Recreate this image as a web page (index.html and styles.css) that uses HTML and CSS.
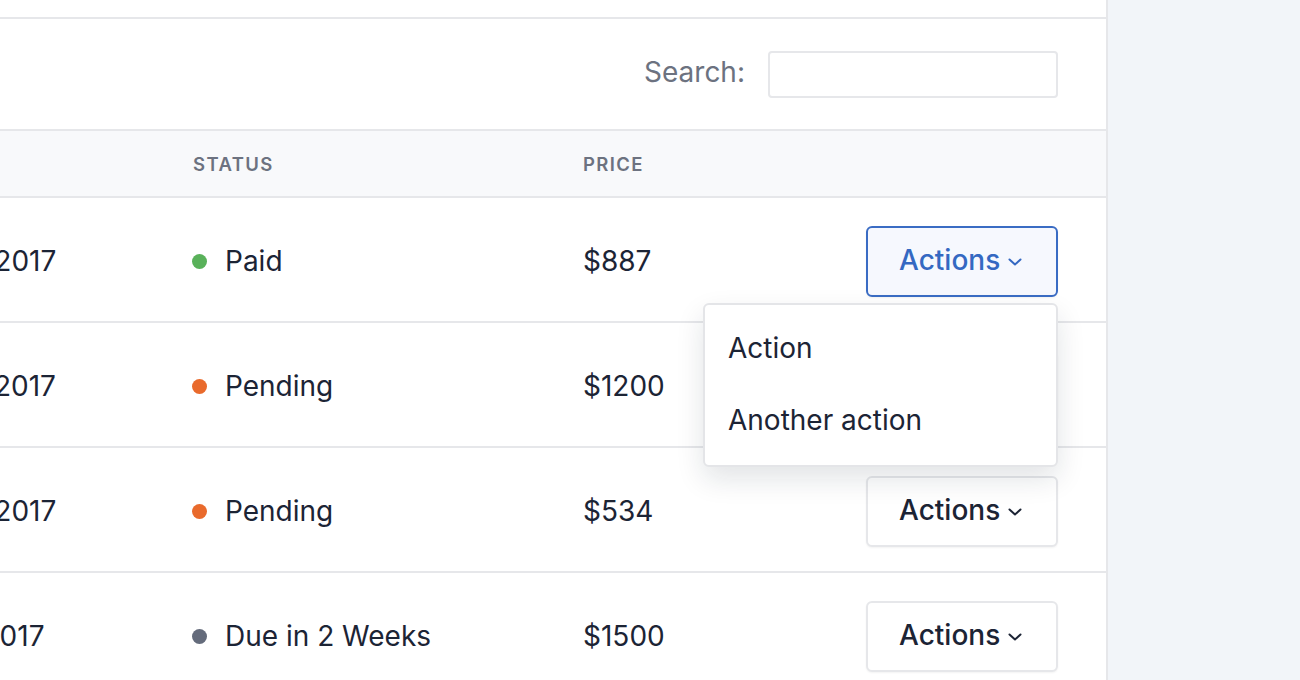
FILE: index.html
```html
<!DOCTYPE html>
<html>
<head>
<meta charset="utf-8">
<link rel="stylesheet" href="styles.css">
</head>
<body>
<div class="page">
  <div class="card">
    <div class="top-strip"></div>
    <div class="search-bar">
      <label class="search-label">Search:</label>
      <input class="search-input" type="text">
    </div>
    <div class="row head">
      <div class="cell date">Date</div>
      <div class="cell status">Status</div>
      <div class="cell price">Price</div>
      <div class="cell action"></div>
    </div>
    <div class="row">
      <div class="cell date">Nov 21, 2017</div>
      <div class="cell status"><span class="dot green"></span>Paid</div>
      <div class="cell price">$887</div>
      <div class="cell action">
        <div class="dropdown">
          <button class="btn active">Actions<svg class="chev" viewBox="0 0 14 8"><path d="M1.5 1.5 L7 6.5 L12.5 1.5"/></svg></button>
          <div class="menu">
            <div class="menu-item">Action</div>
            <div class="menu-item">Another action</div>
          </div>
        </div>
      </div>
    </div>
    <div class="row">
      <div class="cell date">Nov 18, 2017</div>
      <div class="cell status"><span class="dot orange"></span>Pending</div>
      <div class="cell price">$1200</div>
      <div class="cell action"><button class="btn">Actions<svg class="chev" viewBox="0 0 14 8"><path d="M1.5 1.5 L7 6.5 L12.5 1.5"/></svg></button></div>
    </div>
    <div class="row">
      <div class="cell date">Nov 12, 2017</div>
      <div class="cell status"><span class="dot orange"></span>Pending</div>
      <div class="cell price">$534</div>
      <div class="cell action"><button class="btn">Actions<svg class="chev" viewBox="0 0 14 8"><path d="M1.5 1.5 L7 6.5 L12.5 1.5"/></svg></button></div>
    </div>
    <div class="row">
      <div class="cell date">Nov 9, 2017</div>
      <div class="cell status"><span class="dot grey"></span>Due in 2 Weeks</div>
      <div class="cell price">$1500</div>
      <div class="cell action"><button class="btn">Actions<svg class="chev" viewBox="0 0 14 8"><path d="M1.5 1.5 L7 6.5 L12.5 1.5"/></svg></button></div>
    </div>
  </div>
  <div class="side"></div>
</div>
</body>
</html>
```
FILE: styles.css
```css
* { box-sizing: border-box; }
html, body {
  margin: 0;
  padding: 0;
  height: 100%;
  overflow: hidden;
}
body {
  background: #f2f5f9;
  font-family: Inter, "Noto Sans", sans-serif;
  color: #1c2435;
}
.page {
  display: flex;
  height: 680px;
}
.card {
  flex: none;
  width: 1308px;
  margin-left: -200px;
  background: #fff;
  border-right: 2px solid #e6e7ea;
}
.top-strip {
  height: 19px;
  border-bottom: 2px solid #e6e7ea;
}
.search-bar {
  height: 112px;
  display: flex;
  align-items: center;
  justify-content: flex-end;
  padding-right: 48px;
  border-bottom: 2px solid #e6e7ea;
}
.search-label {
  font-size: 28px;
  color: #6c7280;
  margin-right: 23px;
  padding-bottom: 4px;
}
.search-input {
  width: 290px;
  height: 47px;
  border: 2px solid #e6e7ea;
  border-radius: 4px;
  background: #fff;
  margin-top: 1px;
}
.row {
  display: grid;
  grid-template-columns: 393px 390px 1fr 300px;
  align-items: center;
  height: 125px;
  padding-top: 3px;
  border-bottom: 2px solid #e6e7ea;
  font-size: 28px;
}
.row.head {
  height: 67px;
  padding-top: 0;
  background: #f8f9fb;
  font-size: 18.5px;
  font-weight: 600;
  text-transform: uppercase;
  letter-spacing: 1.4px;
  color: #6c7280;
}
.row.head .date { visibility: hidden; }
.cell.date {
  padding-left: 89px;
}
.cell.status {
  display: flex;
  align-items: center;
}
.dot {
  width: 15px;
  height: 15px;
  border-radius: 50%;
  margin-right: 18px;
  margin-left: -1px;
  flex: none;
}
.dot.green { background: #59b15a; }
.dot.orange { background: #e96a2c; }
.dot.grey { background: #646b7b; }
.cell.action {
  display: flex;
  justify-content: flex-end;
  padding-right: 48px;
}
.dropdown {
  position: relative;
}
.btn {
  display: flex;
  align-items: center;
  width: 192px;
  height: 71px;
  padding: 0 0 2px 31px;
  border: 2px solid #e6e7ea;
  border-radius: 6px;
  background: #fff;
  font-family: Inter, "Noto Sans", sans-serif;
  font-size: 28px;
  font-weight: 500;
  color: #1c2435;
  box-shadow: 0 1px 2px rgba(0,0,0,0.05);
}
.btn.active {
  border-color: #3a6cc4;
  background: #f6f8fe;
  color: #3468c2;
}
.chev {
  width: 14px;
  height: 8px;
  margin-left: 8px;
  margin-top: 4px;
  fill: none;
  stroke: currentColor;
  stroke-width: 2;
  stroke-linecap: round;
  stroke-linejoin: round;
}
.menu {
  position: absolute;
  top: 77px;
  right: 0;
  width: 355px;
  padding: 8px 0;
  background: #fff;
  border: 2px solid #e4e5e8;
  border-radius: 6px;
  box-shadow: 0 12px 28px rgba(20, 30, 50, 0.12);
  z-index: 10;
}
.menu-item {
  height: 72px;
  display: flex;
  align-items: center;
  padding-left: 23px;
  padding-bottom: 2px;
  font-size: 28px;
  color: #1c2435;
}
.side {
  flex: 1;
}
```
